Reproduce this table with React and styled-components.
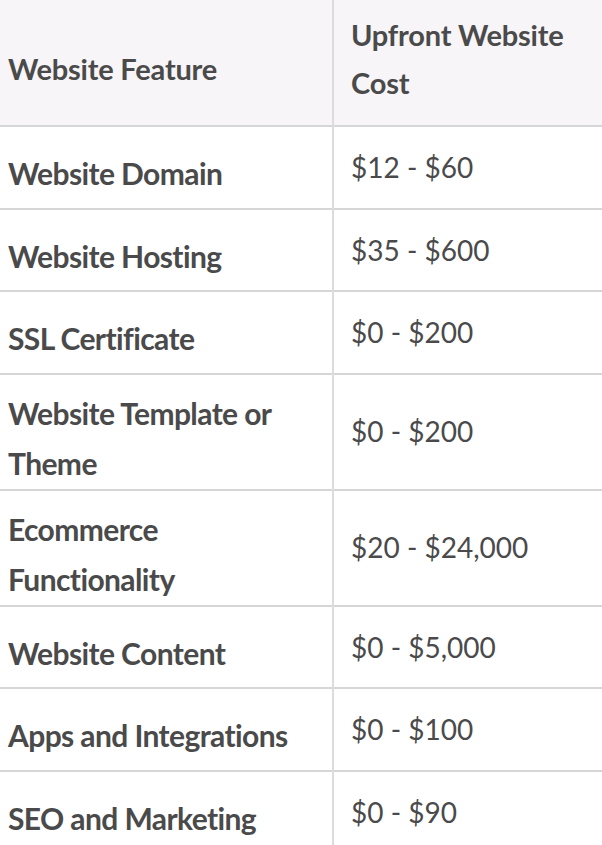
import React from 'react';
import styled, { createGlobalStyle } from 'styled-components';

const GlobalStyle = createGlobalStyle`
  html, body {
    margin: 0;
    padding: 0;
    background: #ffffff;
    overflow: hidden;
  }
  body {
    font-family: Lato, "Open Sans", "Liberation Sans", sans-serif;
    color: #4a4a4b;
  }
`;

const Table = styled.table`
  width: 602px;
  border-collapse: collapse;
  table-layout: fixed;
`;

const HeadRow = styled.tr`
  background: #f7f5f7;
  border-bottom: 2px solid #d6d6d8;
`;

const Row = styled.tr`
  border-bottom: 2px solid #d6d6d8;
`;

const HeadCell = styled.th`
  text-align: left;
  vertical-align: middle;
  font-weight: 700;
  font-size: 29px;
  line-height: 48px;
  letter-spacing: -0.2px;
  height: 125px;
  box-sizing: border-box;
  padding: ${(p) => (p.$first ? '12px 8px 0' : '11px 16px 18px 17px')};
  border-right: ${(p) => (p.$first ? '2px solid #dcdcde' : 'none')};
  width: ${(p) => (p.$first ? '333px' : 'auto')};
`;

const Label = styled.td`
  vertical-align: middle;
  font-weight: 700;
  font-size: 30px;
  line-height: 50px;
  letter-spacing: -0.6px;
  padding: 13px 8px 1px;
  border-right: 2px solid #dcdcde;
`;

const Value = styled.td`
  vertical-align: middle;
  font-weight: 400;
  font-size: 28px;
  line-height: 48px;
  padding: 16px 16px 16.5px 17px;
`;

const rows = [
  ['Website Domain', '$12 - $60'],
  ['Website Hosting', '$35 - $600'],
  ['SSL Certificate', '$0 - $200'],
  ['Website Template or Theme', '$0 - $200'],
  ['Ecommerce Functionality', '$20 - $24,000'],
  ['Website Content', '$0 - $5,000'],
  ['Apps and Integrations', '$0 - $100'],
  ['SEO and Marketing', '$0 - $90'],
];

export default function App() {
  return (
    <>
      <GlobalStyle />
      <Table>
        <thead>
          <HeadRow>
            <HeadCell $first>Website Feature</HeadCell>
            <HeadCell>Upfront Website Cost</HeadCell>
          </HeadRow>
        </thead>
        <tbody>
          {rows.map(([feature, cost]) => (
            <Row key={feature}>
              <Label>{feature}</Label>
              <Value>{cost}</Value>
            </Row>
          ))}
        </tbody>
      </Table>
    </>
  );
}
